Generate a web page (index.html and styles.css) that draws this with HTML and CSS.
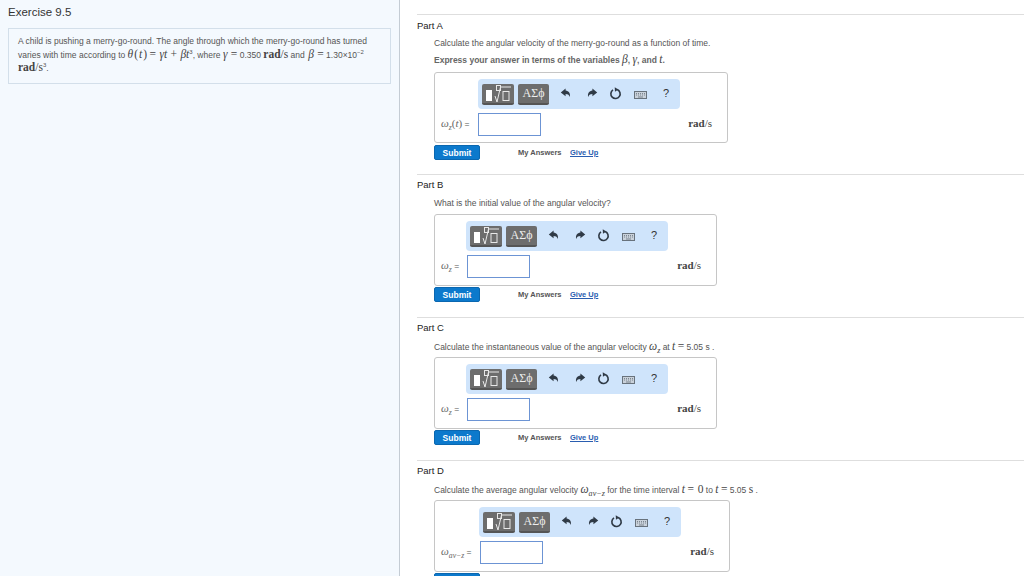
FILE: index.html
```html
<!DOCTYPE html>
<html lang="en">
<head>
<meta charset="utf-8">
<title>Exercise 9.5</title>
<link rel="stylesheet" href="styles.css">
</head>
<body>
<svg class="defs" width="0" height="0" aria-hidden="true">
  <symbol id="i-undo" viewBox="0 0 12 12"><path d="M5.600 1.400 .8 5.400l4.800 3.800V7c2 0 3.400.6 4.200 3 .9-3.700-1-6.300-4.200-6.600z" fill="#2f3a46"/></symbol>
  <symbol id="i-redo" viewBox="0 0 12 12"><path d="M6.400 1.400 11.200 5.400 6.400 9.200V7c-2 0-3.400.6-4.200 3-.9-3.700 1-6.300 4.200-6.600z" fill="#2f3a46"/></symbol>
  <symbol id="i-reset" viewBox="0 0 12 12"><path d="M7.500 2.300A4.300 4.300 0 1 1 3.700 2.700" fill="none" stroke="#2f3a46" stroke-width="1.500"/><path d="M5.300.3 8.600 2.400 5.500 4.400z" fill="#2f3a46"/></symbol>
  <symbol id="i-keys" viewBox="0 0 13 8"><rect x=".5" y=".5" width="12" height="7" fill="#c9d1da" stroke="#68727c"/><path d="M2 2.500h9M2 4h9" stroke="#68727c" stroke-width=".8" stroke-dasharray="1 1"/><path d="M4 6h5" stroke="#68727c" stroke-width=".8"/></symbol>
  <symbol id="i-root" viewBox="0 0 32 21"><rect x="4" y="7" width="6" height="11" fill="#fff"/><rect x="14.500" y="2.500" width="4" height="5" fill="none" stroke="#e8e8e8"/><path d="M13 13l2 6 3.500-15H29" fill="none" stroke="#e8e8e8"/><rect x="21" y="8.500" width="6" height="9" fill="none" stroke="#e8e8e8"/></symbol>
</svg>

<aside class="intro">
  <h1 class="title">Exercise 9.5</h1>
  <div class="statement">
    A child is pushing a merry-go-round. The angle through which the merry-go-round has turned<br>
    varies with time according to <span class="m">θ</span><span class="r">(</span><span class="m">t</span><span class="r">)</span> <span class="r">=</span> <span class="m">γt</span> <span class="r">+</span> <span class="m">βt</span><sup>3</sup>, where <span class="m">γ</span> <span class="r">=</span> 0.350 <span class="r"><b>rad</b>/s</span> and <span class="m">β</span> <span class="r">=</span> 1.30×10<sup>−2</sup><br>
    <span class="r"><b>rad</b>/s</span><sup>3</sup>.
  </div>
</aside>

<main class="parts">
  <section class="part part-a">
    <h2 class="part-title">Part A</h2>
    <p class="prompt">Calculate the angular velocity of the merry-go-round as a function of time.</p>
    <p class="prompt prompt-strong">Express your answer in terms of the variables <span class="m">β</span>, <span class="m">γ</span>, and <span class="m">t</span>.</p>
    <div class="answer">
      <div class="toolbar">
        <button class="tool tool-root"><svg width="32" height="21"><use href="#i-root"/></svg></button>
        <button class="tool tool-greek">ΑΣϕ</button>
        <svg class="ic ic-undo" width="12" height="12"><use href="#i-undo"/></svg>
        <svg class="ic ic-redo" width="12" height="12"><use href="#i-redo"/></svg>
        <svg class="ic ic-reset" width="13" height="13"><use href="#i-reset"/></svg>
        <svg class="ic ic-keys" width="13" height="8"><use href="#i-keys"/></svg>
        <span class="help">?</span>
      </div>
      <label class="var"><span class="m">ω<sub>z</sub></span><span class="r">(</span><span class="m">t</span><span class="r">)</span> =</label>
      <input class="field" type="text">
      <span class="unit"><b>rad</b>/s</span>
    </div>
    <div class="actions"><button class="submit">Submit</button><span class="mine">My Answers</span><a class="giveup" href="#">Give Up</a></div>
  </section>

  <section class="part part-b">
    <h2 class="part-title">Part B</h2>
    <p class="prompt">What is the initial value of the angular velocity?</p>
    <div class="answer">
      <div class="toolbar">
        <button class="tool tool-root"><svg width="32" height="21"><use href="#i-root"/></svg></button>
        <button class="tool tool-greek">ΑΣϕ</button>
        <svg class="ic ic-undo" width="12" height="12"><use href="#i-undo"/></svg>
        <svg class="ic ic-redo" width="12" height="12"><use href="#i-redo"/></svg>
        <svg class="ic ic-reset" width="13" height="13"><use href="#i-reset"/></svg>
        <svg class="ic ic-keys" width="13" height="8"><use href="#i-keys"/></svg>
        <span class="help">?</span>
      </div>
      <label class="var"><span class="m">ω<sub>z</sub></span> =</label>
      <input class="field" type="text">
      <span class="unit"><b>rad</b>/s</span>
    </div>
    <div class="actions"><button class="submit">Submit</button><span class="mine">My Answers</span><a class="giveup" href="#">Give Up</a></div>
  </section>

  <section class="part part-c">
    <h2 class="part-title">Part C</h2>
    <p class="prompt">Calculate the instantaneous value of the angular velocity <span class="m">ω<sub>z</sub></span> at <span class="m">t</span> <span class="r">=</span> 5.05 s .</p>
    <div class="answer">
      <div class="toolbar">
        <button class="tool tool-root"><svg width="32" height="21"><use href="#i-root"/></svg></button>
        <button class="tool tool-greek">ΑΣϕ</button>
        <svg class="ic ic-undo" width="12" height="12"><use href="#i-undo"/></svg>
        <svg class="ic ic-redo" width="12" height="12"><use href="#i-redo"/></svg>
        <svg class="ic ic-reset" width="13" height="13"><use href="#i-reset"/></svg>
        <svg class="ic ic-keys" width="13" height="8"><use href="#i-keys"/></svg>
        <span class="help">?</span>
      </div>
      <label class="var"><span class="m">ω<sub>z</sub></span> =</label>
      <input class="field" type="text">
      <span class="unit"><b>rad</b>/s</span>
    </div>
    <div class="actions"><button class="submit">Submit</button><span class="mine">My Answers</span><a class="giveup" href="#">Give Up</a></div>
  </section>

  <section class="part part-d">
    <h2 class="part-title">Part D</h2>
    <p class="prompt">Calculate the average angular velocity <span class="m">ω<sub>av−z</sub></span> for the time interval <span class="m">t</span> <span class="r">= 0</span> to <span class="m">t</span> <span class="r">=</span> 5.05 <span class="r">s</span> .</p>
    <div class="answer">
      <div class="toolbar">
        <button class="tool tool-root"><svg width="32" height="21"><use href="#i-root"/></svg></button>
        <button class="tool tool-greek">ΑΣϕ</button>
        <svg class="ic ic-undo" width="12" height="12"><use href="#i-undo"/></svg>
        <svg class="ic ic-redo" width="12" height="12"><use href="#i-redo"/></svg>
        <svg class="ic ic-reset" width="13" height="13"><use href="#i-reset"/></svg>
        <svg class="ic ic-keys" width="13" height="8"><use href="#i-keys"/></svg>
        <span class="help">?</span>
      </div>
      <label class="var"><span class="m">ω<sub>av−z</sub></span> =</label>
      <input class="field" type="text">
      <span class="unit"><b>rad</b>/s</span>
    </div>
    <div class="actions"><button class="submit" aria-label="Submit"></button></div>
  </section>
</main>
</body>
</html>
```
FILE: styles.css
```css
* { box-sizing: border-box; }
html, body { height: 100%; }
body {
  margin: 0;
  height: 576px;
  overflow: hidden;
  display: flex;
  background: #fff;
  color: #555;
  font: 8.5px/12px "Liberation Sans", Arial, sans-serif;
}
.defs { position: absolute; }

.intro {
  flex: 0 0 400px;
  height: 576px;
  padding: 6px 8px 0;
  background: #f4f9fe;
  border-right: 1px solid #c4ccd4;
}
.title {
  margin: 0 0 9px;
  font-size: 11.500px;
  line-height: 13px;
  font-weight: 400;
  color: #333;
}
.statement {
  height: 56px;
  padding: 6px 9px 0;
  border: 1px solid #d3dfea;
  line-height: 12.500px;
  color: #555;
  white-space: nowrap;
}
sup, sub { font-size: 70%; line-height: 0; }
.m { font-family: "Liberation Serif", serif; font-style: italic; font-size: 11.500px; color: #444; }
.r { font-family: "Liberation Serif", serif; font-size: 11.500px; color: #444; }
.statement .m, .statement .r, .prompt .r { word-spacing: 1px; }
.statement .r + .m, .statement .m + .r { margin-left: 1px; }
.statement b { font-weight: 700; }

.parts { flex: 1; min-width: 0; padding: 14px 0 0 17px; }
.part { border-top: 1px solid #dedede; height: 143px; }
.part-a { height: 160px; }
.part-title {
  margin: 0;
  padding-top: 4px;
  font-size: 9.500px;
  line-height: 12px;
  font-weight: 400;
  color: #222;
}
.part-a .part-title { padding-top: 5px; }
.prompt { margin: 6px 0 0 17px; height: 12px; white-space: nowrap; }
.part-a .prompt { margin-top: 5px; }
.part-a .prompt-strong { margin-top: 4px; font-weight: 700; color: #666; }
.part-a .prompt-strong .m { font-weight: 400; }

.answer {
  display: grid;
  grid-template-columns: 38px 202px 1fr;
  grid-template-rows: 30px 23px;
  row-gap: 4px;
  align-items: center;
  width: 294px;
  height: 72px;
  margin: 5px 0 1px 17px;
  padding: 6px 15px 0 5px;
  border: 1px solid #c6c6c6;
  border-radius: 3px;
}
.part-a .answer { height: 71px; margin: 7px 0 2px 17px; }
.part-b .answer, .part-c .answer { width: 283px; grid-template-columns: 27px 202px 1fr; }
.part-d .answer { width: 296px; grid-template-columns: 40px 203px 1fr; }

.toolbar {
  grid-column: 2 / 4;
  grid-row: 1;
  position: relative;
  display: flex;
  align-items: center;
  width: 202px;
  height: 30px;
  padding-left: 4px;
  background: #cfe4fb;
  border-radius: 4px;
}
.part-b .toolbar, .part-c .toolbar, .part-d .toolbar { margin-left: -1px; }
.tool {
  height: 21px;
  padding: 0;
  border: 0;
  border-bottom: 2px solid #555;
  border-radius: 2px;
  background: #6d6d6d;
  color: #eee;
  display: flex;
  align-items: center;
  justify-content: center;
}
.tool-root { width: 32px; margin-right: 4px; }
.tool-greek { width: 31px; font: 12px "Liberation Serif", "DejaVu Serif", serif; }
.ic { position: absolute; top: 8px; }
.ic-undo { left: 82px; }
.ic-redo { left: 108px; }
.ic-reset { left: 131px; }
.ic-keys { left: 156px; top: 12px; }
.help { position: absolute; left: 185px; top: 7px; font-size: 11px; line-height: 14px; color: #333; }

.var { grid-row: 2; grid-column: 1; white-space: nowrap; padding-left: 1px; margin-bottom: 3px; font-size: 8.500px; }
.var .m { font-size: 11px; color: #666; }
.var .r { font-size: 11px; color: #666; }
.field { grid-row: 2; grid-column: 2; width: 63px; height: 23px; border: 1px solid #6c94d4; background: #fff; padding: 0; }
.unit { grid-row: 2; grid-column: 3; justify-self: end; margin-bottom: 4px; font: 400 11px "Liberation Serif", serif; color: #444; }

.actions { display: flex; align-items: center; margin-left: 17px; height: 15px; }
.submit {
  width: 46px;
  height: 15px;
  margin-right: 38px;
  padding: 0;
  border: 1px solid #0a67b0;
  border-radius: 2px;
  background: #0c79cc;
  color: #fff;
  font: 700 8.500px "Liberation Sans", Arial, sans-serif;
}
.mine { width: 52px; font-size: 7.500px; font-weight: 700; color: #555; }
.giveup { font-size: 7.500px; font-weight: 700; color: #2a5db0; }
```
